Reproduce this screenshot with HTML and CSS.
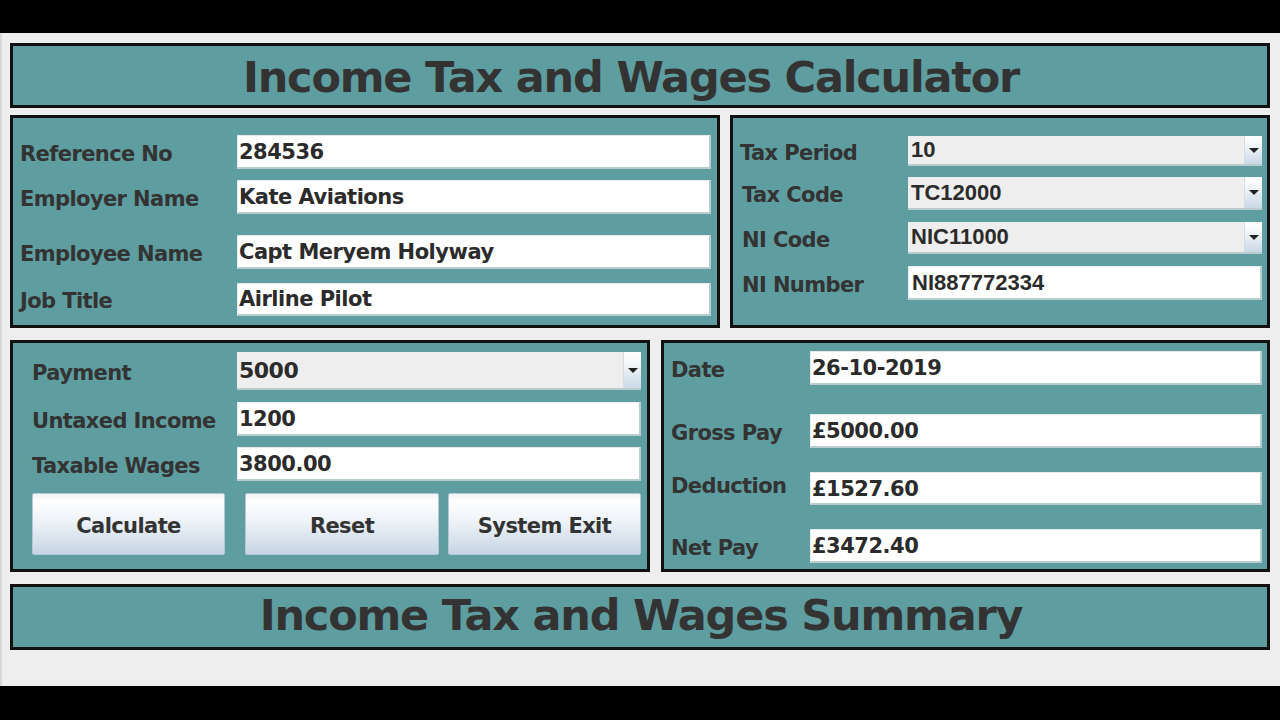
FILE: index.html
```html
<!DOCTYPE html>
<html>
<head>
<meta charset="utf-8">
<title>Income Tax and Wages Calculator</title>
<link rel="stylesheet" href="styles.css">
</head>
<body>
<div class="window">
  <div class="panel title-panel"><h1 class="title">Income Tax and Wages Calculator</h1></div>

  <div class="row row-top">
    <div class="panel p-employee">
      <div class="line l1"><span class="lbl">Reference No</span><div class="field">284536</div></div>
      <div class="line l2"><span class="lbl">Employer Name</span><div class="field">Kate Aviations</div></div>
      <div class="line l3"><span class="lbl">Employee Name</span><div class="field">Capt Meryem Holyway</div></div>
      <div class="line l4"><span class="lbl">Job Title</span><div class="field">Airline Pilot</div></div>
    </div>
    <div class="panel p-tax">
      <div class="line t1"><span class="lbl lbl-tp">Tax Period</span><div class="combo small"><span class="val">10</span><span class="arrow"></span></div></div>
      <div class="line t2"><span class="lbl">Tax Code</span><div class="combo small"><span class="val">TC12000</span><span class="arrow"></span></div></div>
      <div class="line t3"><span class="lbl">NI Code</span><div class="combo small"><span class="val">NIC11000</span><span class="arrow"></span></div></div>
      <div class="line t4"><span class="lbl">NI Number</span><div class="field small">NI887772334</div></div>
    </div>
  </div>

  <div class="row row-mid">
    <div class="panel p-pay">
      <div class="line m1"><span class="lbl">Payment</span><div class="combo"><span class="val">5000</span><span class="arrow"></span></div></div>
      <div class="line m2"><span class="lbl">Untaxed Income</span><div class="field">1200</div></div>
      <div class="line m3"><span class="lbl">Taxable Wages</span><div class="field">3800.00</div></div>
      <div class="buttons">
        <button class="btn">Calculate</button>
        <button class="btn btn-reset">Reset</button>
        <button class="btn btn-exit">System Exit</button>
      </div>
    </div>
    <div class="panel p-result">
      <div class="line r1"><span class="lbl">Date</span><div class="field">26-10-2019</div></div>
      <div class="line r2"><span class="lbl">Gross Pay</span><div class="field">£5000.00</div></div>
      <div class="line r3"><span class="lbl lbl-up">Deduction</span><div class="field">£1527.60</div></div>
      <div class="line r4"><span class="lbl">Net Pay</span><div class="field">£3472.40</div></div>
    </div>
  </div>

  <div class="panel summary-panel"><h2 class="title summary">Income Tax and Wages Summary</h2></div>
</div>
</body>
</html>
```
FILE: styles.css
```css
* { box-sizing: border-box; }
html, body { margin: 0; padding: 0; }
body {
  background: #000;
  width: 1280px;
  height: 720px;
  overflow: hidden;
  font-family: "DejaVu Sans", Verdana, sans-serif;
  color: #333;
}
.window {
  margin-top: 33px;
  height: 653px;
  background: #eeeeee;
  border-left: 2px solid #d8d8d8;
  padding: 10px 10px 0 8px;
}
.panel {
  background: #5f9ea0;
  border: 3px solid #111;
}
.title-panel {
  height: 65px;
  display: flex;
  align-items: center;
  justify-content: center;
}
.title {
  margin: 0;
  font-weight: bold;
  font-size: 43px;
  letter-spacing: -1.2px;
  color: #333;
  line-height: 1;
  padding-right: 18px;
  padding-top: 4px;
}
.summary { padding-right: 0; padding-left: 2px; padding-top: 0; margin-top: -4px; }

.row { display: flex; }
.row-top { margin-top: 7px; height: 213px; gap: 10px; }
.row-mid { margin-top: 12px; height: 232px; gap: 11px; }
.summary-panel { margin-top: 12px; height: 66px; display: flex; align-items: center; justify-content: center; }

.p-employee { width: 710px; padding: 0 6px 0 7px; }
.p-tax { width: 540px; padding: 0 5px 0 7px; }
.p-pay { width: 640px; padding: 0 6px 0 19px; }
.p-result { width: 609px; padding: 0 5px 0 7px; }

.line { display: flex; align-items: center; }
.lbl {
  font-weight: bold;
  font-size: 21px;
  letter-spacing: -0.6px;
  color: #333;
  white-space: nowrap;
  padding-top: 3px;
}
.p-employee .lbl { width: 217px; flex: none; }
.p-tax .lbl { width: 168px; flex: none; padding-left: 2px; }
.p-tax .lbl-tp { padding-left: 0; }
.p-pay .lbl { width: 205px; flex: none; }
.p-result .lbl { width: 139px; flex: none; }
.lbl-up { position: relative; top: -4px; }

.field {
  flex: 1;
  height: 34px;
  background: #fff;
  border: 1px solid #e4eced;
  border-right: 2px solid #b9cdd0;
  border-bottom: 2px solid #b9cdd0;
  font-weight: bold;
  font-size: 21px;
  letter-spacing: -0.5px;
  color: #2b2b2b;
  padding-left: 1px;
  padding-top: 1px;
  display: flex;
  align-items: center;
  white-space: nowrap;
}
.combo {
  flex: 1;
  display: flex;
  align-items: stretch;
  background: #eeeeee;
  border-bottom: 2px solid #b9cdd0;
  font-weight: bold;
  font-size: 21px;
  letter-spacing: -0.5px;
  color: #2b2b2b;
}
.field.small, .combo.small {
  font-family: "Liberation Sans", Arial, sans-serif;
  font-size: 22px;
  letter-spacing: 0;
  padding-left: 3px;
}
.combo .val { flex: 1; display: flex; align-items: center; padding-left: 2px; }
.combo.small .val { padding-left: 0; }
.arrow {
  width: 18px;
  flex: none;
  background: linear-gradient(#ffffff 0%, #f4f7fa 30%, #c9d8e6 100%);
  border-left: 1px solid #d6dde3;
  display: flex;
  align-items: center;
  justify-content: center;
}
.arrow::after {
  content: "";
  width: 0; height: 0;
  border-left: 5px solid transparent;
  border-right: 5px solid transparent;
  border-top: 5px solid #222;
}

/* employee panel rows */
.l1 { margin-top: 17px; height: 34px; }
.l2 { margin-top: 11px; height: 34px; }
.l3 { margin-top: 21px; height: 34px; }
.l4 { margin-top: 13px; height: 34px; }
.l4 .field { height: 33px; }

/* tax panel rows */
.t1 { margin-top: 18px; height: 30px; }
.t2 { margin-top: 11px; height: 33px; }
.t3 { margin-top: 12px; height: 32px; }
.t4 { margin-top: 12px; height: 34px; }
.t1 .combo, .t2 .combo, .t3 .combo { height: 100%; }

/* pay panel rows */
.m1 { margin-top: 9px; height: 38px; }
.m1 .combo { height: 38px; font-size: 22px; }
.m2 { margin-top: 12px; height: 34px; }
.m3 { margin-top: 11px; height: 34px; }

.buttons { display: flex; margin-top: 12px; height: 62px; }
.btn {
  width: 193px;
  height: 62px;
  font-family: "DejaVu Sans", Verdana, sans-serif;
  font-weight: bold;
  font-size: 21px;
  letter-spacing: -0.6px;
  color: #333;
  background: linear-gradient(#f1f4f8 0%, #ffffff 12%, #eef3f8 45%, #c6d5e4 100%);
  border: 1px solid #b6c6d6;
  border-radius: 2px;
  padding: 4px 0 0 0;
}
.btn-reset { width: 194px; margin-left: 20px; }
.btn-exit { margin-left: 9px; }

/* result panel rows */
.r1 { margin-top: 8px; height: 34px; }
.r2 { margin-top: 29px; height: 34px; }
.r3 { margin-top: 24px; height: 33px; }
.r4 { margin-top: 24px; height: 34px; }
.r3 .field { height: 33px; }
```
